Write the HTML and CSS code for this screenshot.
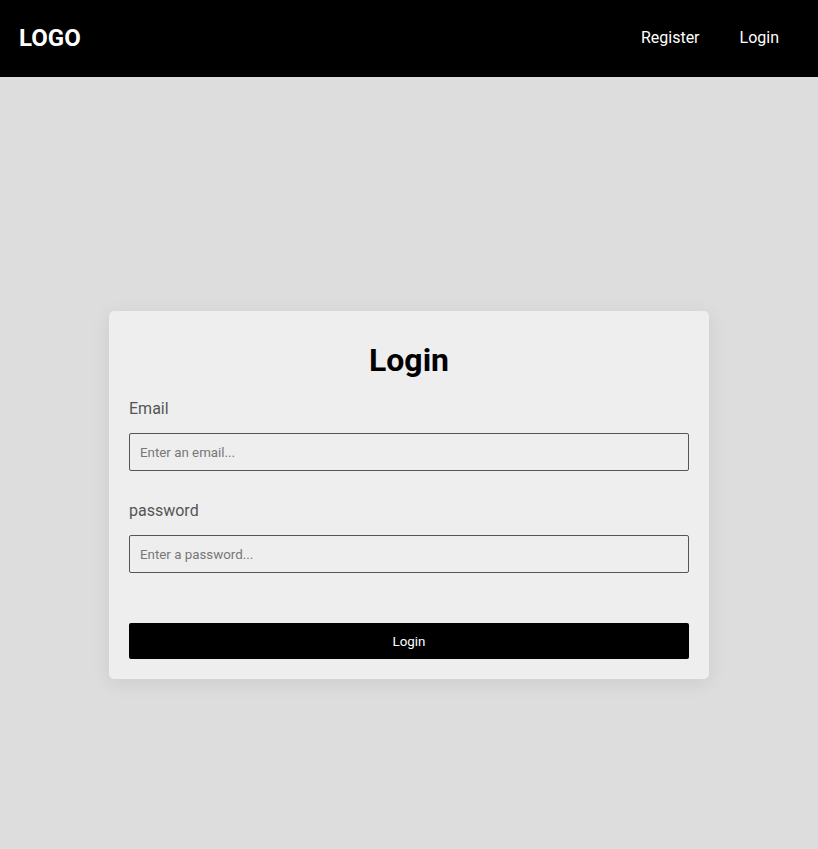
FILE: index.html
```html
<!DOCTYPE html>
<html lang="en">
<head>
<meta charset="utf-8">
<title>Login</title>
<link rel="stylesheet" href="styles.css">
</head>
<body>
<header class="topbar">
  <div class="logo">LOGO</div>
  <nav class="nav">
    <a class="nav-link" href="#">Register</a>
    <a class="nav-link" href="#">Login</a>
  </nav>
</header>
<main class="main">
  <form class="card">
    <h1 class="title">Login</h1>
    <div class="field">
      <label class="label" for="email">Email</label>
      <input class="input" id="email" type="email" placeholder="Enter an email...">
    </div>
    <div class="field">
      <label class="label" for="password">password</label>
      <input class="input" id="password" type="password" placeholder="Enter a password...">
    </div>
    <button class="btn" type="button">Login</button>
  </form>
</main>
</body>
</html>
```
FILE: styles.css
```css
* { box-sizing: border-box; }
html, body {
  margin: 0;
  padding: 0;
}
body {
  background: #dddddd;
  font-family: Roboto, "Liberation Sans", sans-serif;
  min-height: 849px;
}
.topbar {
  height: 77px;
  background: #000;
  color: #fff;
  display: flex;
  align-items: center;
  justify-content: space-between;
  padding: 0 19px 2px 19px;
}
.logo {
  font-size: 24px;
  font-weight: 700;
  line-height: 28px;
}
.nav {
  display: flex;
}
.nav-link {
  color: #fff;
  text-decoration: none;
  font-size: 16px;
  line-height: 19px;
  padding: 0 20px;
}
.main {
  display: flex;
  justify-content: center;
  padding-top: 234px;
}
.card {
  width: 600px;
  background: #eeeeee;
  border-radius: 5px;
  padding: 20px;
  box-shadow: 0 4px 20px rgba(0, 0, 0, 0.08);
}
.title {
  margin: 10px 0 0;
  font-size: 32px;
  line-height: 38px;
  font-weight: 700;
  text-align: center;
  color: #000;
}
.field {
  display: flex;
  flex-direction: column;
  margin-top: 20px;
}
.field + .field {
  margin-top: 30px;
}
.label {
  font-size: 16px;
  line-height: 19px;
  color: #555;
  margin-bottom: 15px;
}
.input {
  height: 38px;
  border: 1px solid #555;
  border-radius: 2px;
  background: transparent;
  padding: 0 10px;
  font-family: Roboto, "Liberation Sans", sans-serif;
  font-size: 13.333px;
  color: #333;
  outline: none;
}
.input::placeholder {
  color: #777;
}
.btn {
  display: block;
  width: 100%;
  height: 36px;
  margin-top: 50px;
  background: #000;
  color: #fff;
  border: none;
  border-radius: 2px;
  font-family: Roboto, "Liberation Sans", sans-serif;
  font-size: 13.333px;
  font-weight: 400;
  cursor: pointer;
}
```
